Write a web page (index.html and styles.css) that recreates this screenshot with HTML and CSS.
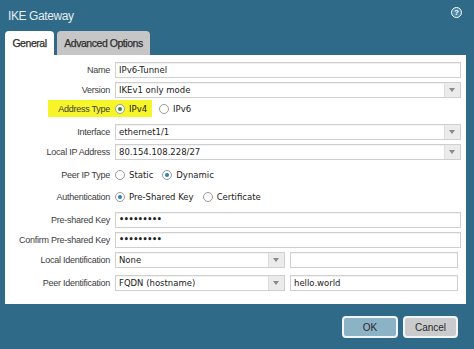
FILE: index.html
```html
<!DOCTYPE html>
<html>
  <head>
    <title>IKE Gateway</title>
    <link rel="stylesheet" href="styles.css">
  </head>
  <body>
    <div class="dialog">
      <div class="title-bar">
        <span class="title">IKE Gateway</span>
        <span class="help">?</span>
      </div>

      <div class="tabs">
        <div class="tab active">General</div>
        <div class="tab">Advanced Options</div>
      </div>

      <div class="panel">
        <div class="row row-name">
          <label class="label">Name</label>
          <div class="field">IPv6-Tunnel</div>
        </div>
        <div class="row row-version">
          <label class="label">Version</label>
          <div class="field select">IKEv1 only mode<span class="arrow"></span></div>
        </div>
        <div class="row row-radio row-addr">
          <div class="highlight">
            <label class="label">Address Type</label>
            <span class="radio checked green"></span><span class="opt">IPv4</span>
          </div>
          <span class="radio"></span><span class="opt">IPv6</span>
        </div>
        <div class="row row-iface">
          <label class="label">Interface</label>
          <div class="field select">ethernet1/1<span class="arrow"></span></div>
        </div>
        <div class="row row-localip">
          <label class="label">Local IP Address</label>
          <div class="field select">80.154.108.228/27<span class="arrow"></span></div>
        </div>
        <div class="row row-radio row-peer">
          <label class="label">Peer IP Type</label>
          <span class="radio"></span><span class="opt">Static</span>
          <span class="radio checked"></span><span class="opt">Dynamic</span>
        </div>
        <div class="row row-radio row-auth">
          <label class="label">Authentication</label>
          <span class="radio checked"></span><span class="opt">Pre-Shared Key</span>
          <span class="radio"></span><span class="opt">Certificate</span>
        </div>
        <div class="row row-psk">
          <label class="label">Pre-shared Key</label>
          <div class="field dots">&#8226;&#8226;&#8226;&#8226;&#8226;&#8226;&#8226;&#8226;&#8226;</div>
        </div>
        <div class="row row-confirm">
          <label class="label">Confirm Pre-shared Key</label>
          <div class="field dots">&#8226;&#8226;&#8226;&#8226;&#8226;&#8226;&#8226;&#8226;&#8226;</div>
        </div>
        <div class="row row-localid">
          <label class="label">Local Identification</label>
          <div class="field select half">None<span class="arrow"></span></div>
          <div class="field second"></div>
        </div>
        <div class="row row-peerid">
          <label class="label">Peer Identification</label>
          <div class="field select half">FQDN (hostname)<span class="arrow"></span></div>
          <div class="field second">hello.world</div>
        </div>
      </div>

      <div class="buttons">
        <button class="btn ok">OK</button>
        <button class="btn cancel">Cancel</button>
      </div>
    </div>
  </body>
</html>
```

FILE: styles.css
```css
body {
  margin: 0;
  background-color: #306a89;
  font-family: 'Liberation Sans', Arial, sans-serif;
  color: #333333;
}

.dialog {
  width: 474px;
  height: 349px;
  box-sizing: border-box;
  padding: 0 8px 0 5px;
}

.title-bar {
  height: 31px;
  display: flex;
  align-items: center;
  justify-content: space-between;
  padding: 0 3px 0 3px;
  box-sizing: border-box;
}

.title {
  color: #e4edf2;
  font-size: 12px;
  letter-spacing: -0.4px;
}

.help {
  width: 9px;
  height: 9px;
  border: 1px solid #ffffff;
  border-radius: 50%;
  background-color: #4a87a8;
  color: #ffffff;
  font-size: 8px;
  font-weight: bold;
  line-height: 9px;
  text-align: center;
  margin-right: 1px;
  margin-top: -7px;
}

.tabs {
  display: flex;
  gap: 3px;
  height: 24px;
}

.tab {
  background-color: #c6c6c6;
  border-radius: 4px 4px 0 0;
  width: 93px;
  text-align: center;
  font-size: 10.5px;
  color: #2e2e2e;
  line-height: 25px;
  letter-spacing: -0.45px;
  -webkit-text-stroke: 0.25px #2e2e2e;
}

.tab.active {
  background-color: #ffffff;
  width: 49px;
}

.panel {
  background-color: #ffffff;
  height: 249px;
  box-sizing: border-box;
  padding-top: 7px;
  padding-right: 5px;
  display: flex;
  flex-direction: column;
}

.row {
  display: flex;
  align-items: center;
  height: 16px;
  font-size: 9px;
}

.row-version { margin-top: 4px; }
.row-addr { margin-top: 2px; height: 17px; }
.row-iface { margin-top: 7px; }
.row-localip { margin-top: 4px; }
.row-peer { margin-top: 7px; }
.row-auth { margin-top: 6px; }
.row-psk { margin-top: 7px; }
.row-confirm { margin-top: 4px; }
.row-localid { margin-top: 4px; }
.row-peerid { margin-top: 7px; }

.label {
  width: 110px;
  flex: 0 0 110px;
  text-align: right;
  padding-right: 5px;
  box-sizing: border-box;
  color: #3c3c3c;
  white-space: nowrap;
  letter-spacing: -0.25px;
}

.highlight {
  display: flex;
  align-items: center;
  height: 17px;
  background-color: #f6f52a;
  margin-left: 43px;
  padding-right: 5px;
}

.highlight .label {
  width: 67px;
  flex: 0 0 67px;
}

.field {
  flex: 1;
  height: 16px;
  box-sizing: border-box;
  border: 1px solid #cfcfcf;
  box-shadow: inset 0 1px 1px rgba(0, 0, 0, 0.06);
  background-color: #ffffff;
  font-family: 'DejaVu Sans', Verdana, sans-serif;
  font-size: 8.5px;
  color: #222222;
  line-height: 14px;
  padding-left: 3px;
  position: relative;
}

.field.select {
  padding-right: 16px;
}

.field.half {
  flex: 0 0 170px;
}

.field.second {
  flex: 1;
  margin-left: 5px;
  margin-right: 3px;
}

.dots {
  font-size: 8px;
  letter-spacing: -0.4px;
  font-weight: bold;
}

.arrow {
  position: absolute;
  top: 0;
  right: 0;
  width: 15px;
  height: 14px;
  background-color: #ebebeb;
  border-left: 1px solid #dddddd;
}

.arrow::after {
  content: "";
  position: absolute;
  left: 4px;
  top: 5px;
  border-left: 3.5px solid transparent;
  border-right: 3.5px solid transparent;
  border-top: 4px solid #8a8a8a;
}

.radio {
  width: 10px;
  height: 10px;
  box-sizing: border-box;
  border: 1px solid #9a9a9a;
  border-radius: 50%;
  background-color: #ffffff;
  position: relative;
  margin-right: 4px;
  flex: 0 0 10px;
}

.radio.checked::after {
  content: "";
  position: absolute;
  left: 2px;
  top: 2px;
  width: 4px;
  height: 4px;
  border-radius: 50%;
  background-color: #2f7fb8;
}

.radio.checked.green::after {
  background-color: #2c8a2c;
}

.opt {
  font-family: 'DejaVu Sans', Verdana, sans-serif;
  font-size: 8.5px;
  color: #222222;
  margin-right: 9px;
}

.highlight .opt {
  margin-right: 0;
}

.row-addr > .radio {
  margin-left: 7px;
}

.buttons {
  display: flex;
  justify-content: flex-end;
  gap: 5px;
  padding-top: 12px;
  padding-right: 8px;
}

.btn {
  height: 22px;
  border: 2px solid #f2f6f8;
  border-radius: 4px;
  font-family: 'Liberation Sans', Arial, sans-serif;
  font-size: 10px;
  color: #2a2a2a;
  padding: 0;
}

.btn.ok {
  width: 56px;
  background-color: #8cb2c6;
}

.btn.cancel {
  width: 55px;
  background-color: #c9cbcd;
}
```
